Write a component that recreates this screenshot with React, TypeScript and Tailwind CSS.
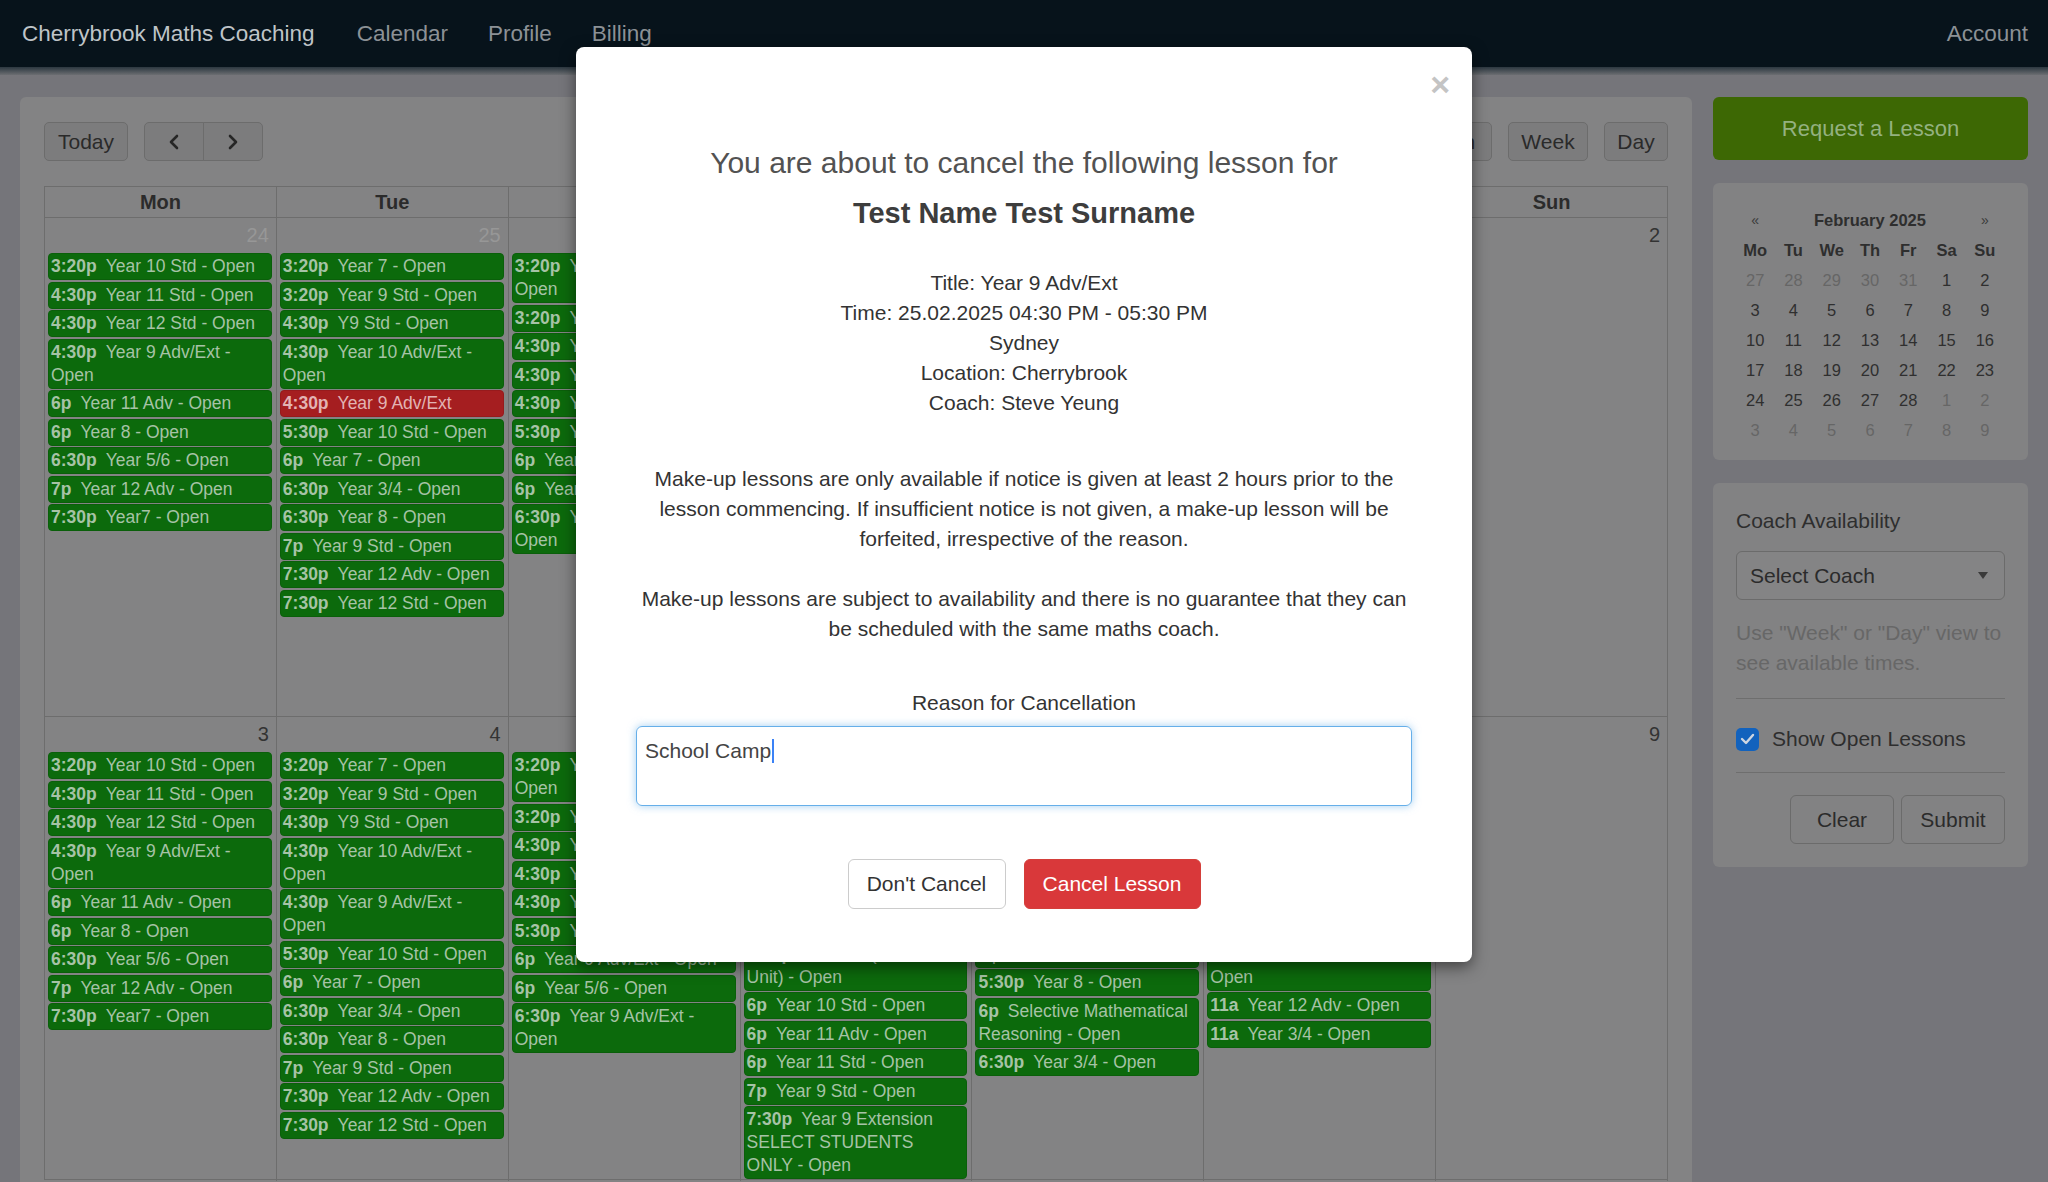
import React from 'react';

type CalEvent = { time: string; title: string; booked?: boolean };
type Day = { num: number; muted?: boolean; events: CalEvent[] };

const ev = (time: string, title: string, booked = false): CalEvent => ({ time, title, booked });

const monday: CalEvent[] = [
  ev('3:20p', 'Year 10 Std - Open'),
  ev('4:30p', 'Year 11 Std - Open'),
  ev('4:30p', 'Year 12 Std - Open'),
  ev('4:30p', 'Year 9 Adv/Ext - Open'),
  ev('6p', 'Year 11 Adv - Open'),
  ev('6p', 'Year 8 - Open'),
  ev('6:30p', 'Year 5/6 - Open'),
  ev('7p', 'Year 12 Adv - Open'),
  ev('7:30p', 'Year7 - Open'),
];

const tuesday = (booked: boolean): CalEvent[] => [
  ev('3:20p', 'Year 7 - Open'),
  ev('3:20p', 'Year 9 Std - Open'),
  ev('4:30p', 'Y9 Std - Open'),
  ev('4:30p', 'Year 10 Adv/Ext - Open'),
  booked ? ev('4:30p', 'Year 9 Adv/Ext', true) : ev('4:30p', 'Year 9 Adv/Ext - Open'),
  ev('5:30p', 'Year 10 Std - Open'),
  ev('6p', 'Year 7 - Open'),
  ev('6:30p', 'Year 3/4 - Open'),
  ev('6:30p', 'Year 8 - Open'),
  ev('7p', 'Year 9 Std - Open'),
  ev('7:30p', 'Year 12 Adv - Open'),
  ev('7:30p', 'Year 12 Std - Open'),
];

const wednesday = (late: CalEvent): CalEvent[] => [
  ev('3:20p', 'Year 10 Adv/Ext - Open'),
  ev('3:20p', 'Year 12 Std - Open'),
  ev('4:30p', 'Year 8 - Open'),
  ev('4:30p', 'Year 10 Std - Open'),
  ev('4:30p', 'Year 11 Adv - Open'),
  ev('5:30p', 'Year 7 - Open'),
  late,
  ev('6p', 'Year 5/6 - Open'),
  ev('6:30p', 'Year 9 Adv/Ext - Open'),
];

const weeks: Day[][] = [
  [
    { num: 24, muted: true, events: monday },
    { num: 25, muted: true, events: tuesday(true) },
    { num: 26, muted: true, events: wednesday(ev('6p', 'Year 9 Std - Open')) },
    {
      num: 27,
      muted: true,
      events: [
        ev('3:20p', 'Year 7 - Open'),
        ev('4:30p', 'Year 8 - Open'),
        ev('4:30p', 'Year 10 Adv/Ext - Open'),
        ev('4:30p', 'Year 12 Std - Open'),
        ev('5:30p', 'Year 9 Std - Open'),
        ev('5:30p', 'Year 11 Std - Open'),
        ev('6p', 'Year 10 Std - Open'),
        ev('6p', 'Year 11 Adv - Open'),
        ev('7p', 'Year 9 Std - Open'),
      ],
    },
    {
      num: 28,
      muted: true,
      events: [
        ev('3:20p', 'Year 8 - Open'),
        ev('4:30p', 'Year 11 Std - Open'),
        ev('4:30p', 'Year 12 Adv - Open'),
        ev('5:30p', 'Year 7 - Open'),
        ev('5:30p', 'Year 8 - Open'),
        ev('6:30p', 'Year 3/4 - Open'),
      ],
    },
    {
      num: 1,
      events: [
        ev('9a', 'Year 7 - Open'),
        ev('9a', 'Year 10 Std - Open'),
        ev('10a', 'Year 11 Std - Open'),
        ev('11a', 'Year 12 Adv - Open'),
        ev('11a', 'Year 3/4 - Open'),
      ],
    },
    { num: 2, events: [] },
  ],
  [
    { num: 3, events: monday },
    { num: 4, events: tuesday(false) },
    { num: 5, events: wednesday(ev('6p', 'Year 9 Adv/Ext - Open')) },
    {
      num: 6,
      events: [
        ev('3:20p', 'Year 7 - Open'),
        ev('4:30p', 'Year 10 Adv/Ext - Open'),
        ev('4:30p', 'Year 12 Std - Open'),
        ev('5:30p', 'Year 9 Adv/Ext - Open'),
        ev('5:30p', 'Year 11 Std - Open'),
        ev('5:30p', 'Year 5/6 (Selective Unit) - Open'),
        ev('6p', 'Year 10 Std - Open'),
        ev('6p', 'Year 11 Adv - Open'),
        ev('6p', 'Year 11 Std - Open'),
        ev('7p', 'Year 9 Std - Open'),
        ev('7:30p', 'Year 9 Extension\nSELECT STUDENTS\nONLY - Open'),
      ],
    },
    {
      num: 7,
      events: [
        ev('3:20p', 'Year 8 - Open'),
        ev('4:30p', 'Year 9 Adv/Ext - Open'),
        ev('4:30p', 'Year 11 Std - Open'),
        ev('4:30p', 'Year 12 Adv - Open'),
        ev('5:30p', 'Year 7 - Open'),
        ev('5:30p', 'Year 10 Adv/Ext - Open'),
        ev('5:30p', 'Year 8 - Open'),
        ev('6p', 'Selective Mathematical Reasoning - Open'),
        ev('6:30p', 'Year 3/4 - Open'),
      ],
    },
    {
      num: 8,
      events: [
        ev('9a', 'Year 7 - Open'),
        ev('9:30a', 'Year 9 Adv/Ext - Open'),
        ev('9:30a', 'Year 10 Adv/Ext - Open'),
        ev('10a', 'Year 11 Std - Open'),
        ev('10a', 'Year 8 - Open'),
        ev('10:30a', 'Year 10 Adv/Ext - Open'),
        ev('11a', 'Year 12 Adv - Open'),
        ev('11a', 'Year 3/4 - Open'),
      ],
    },
    { num: 9, events: [] },
  ],
];

const miniRows: { n: number; muted?: boolean }[][] = [
  [27, 28, 29, 30, 31].map(n => ({ n, muted: true })).concat([{ n: 1 }, { n: 2 }]),
  [3, 4, 5, 6, 7, 8, 9].map(n => ({ n })),
  [10, 11, 12, 13, 14, 15, 16].map(n => ({ n })),
  [17, 18, 19, 20, 21, 22, 23].map(n => ({ n })),
  [24, 25, 26, 27, 28].map(n => ({ n })).concat([{ n: 1, muted: true }, { n: 2, muted: true }]),
  [3, 4, 5, 6, 7, 8, 9].map(n => ({ n, muted: true })),
];

function EventChip({ item }: { item: CalEvent }) {
  return (
    <div
      className={`ml-[3px] mr-[4px] mb-[1.5px] rounded-[4px] border px-[2px] py-px text-[17.5px] leading-[23px] whitespace-pre-line ${
        item.booked
          ? 'bg-[#a51e20] border-[#971a1c] text-[#e2b3b3]'
          : 'bg-[#0c6a0c] border-[#0a5f0a] text-[#a6c3a6]'
      }`}
    >
      <span className="font-bold mr-[9px]">{item.time}</span>
      {item.title}
    </div>
  );
}

function ToolbarButton({ children, className = '' }: { children: React.ReactNode; className?: string }) {
  return (
    <button
      className={`h-[39px] rounded-[5px] border border-[#6c6c6c] bg-[#7c7c7d] text-[21px] text-[#2a2a2a] ${className}`}
    >
      {children}
    </button>
  );
}

function Chevron({ dir }: { dir: 'left' | 'right' }) {
  return (
    <svg width="12" height="16" viewBox="0 0 12 16" fill="none" stroke="#262626" strokeWidth="2.6" strokeLinecap="round" strokeLinejoin="round">
      {dir === 'left' ? <polyline points="9,2 3,8 9,14" /> : <polyline points="3,2 9,8 3,14" />}
    </svg>
  );
}

export default function App() {
  return (
    <div className="relative h-[1182px] overflow-hidden bg-[#75757a] font-['Liberation_Sans',Arial,sans-serif]">
      {/* Navbar */}
      <nav className="flex h-[67px] items-center bg-[#07131b] pl-[22px] pr-[20px] text-[22.5px]">
        <span className="text-[#bfc4c8]">Cherrybrook Maths Coaching</span>
        <div className="ml-[42px] flex gap-[40px] text-[#8c9196]">
          <span>Calendar</span>
          <span>Profile</span>
          <span>Billing</span>
        </div>
        <span className="ml-auto text-[#8c9196]">Account</span>
      </nav>
      <div className="h-[8px] bg-linear-to-b from-[#2c3840] to-[#6c6e72]" />

      <div className="flex gap-[21px] px-[20px] pt-[22px]">
        {/* Calendar panel */}
        <div className="h-[1200px] w-[1672px] rounded-[6px] bg-[#838384] px-[24px] pt-[25px]">
          <div className="flex h-[39px] items-center justify-between">
            <div className="flex gap-[16px]">
              <ToolbarButton className="w-[84px]">Today</ToolbarButton>
              <div className="flex">
                <button className="flex h-[39px] w-[60px] items-center justify-center rounded-l-[5px] border border-[#6c6c6c] bg-[#7c7c7d]">
                  <Chevron dir="left" />
                </button>
                <button className="-ml-px flex h-[39px] w-[60px] items-center justify-center rounded-r-[5px] border border-[#6c6c6c] bg-[#7c7c7d]">
                  <Chevron dir="right" />
                </button>
              </div>
            </div>
            <h2 className="text-[28px] text-[#2a2a2a]">March 2025</h2>
            <div className="flex gap-[16px]">
              <ToolbarButton className="w-[92px] bg-[#5f5f60]">Month</ToolbarButton>
              <ToolbarButton className="w-[80px]">Week</ToolbarButton>
              <ToolbarButton className="w-[64px]">Day</ToolbarButton>
            </div>
          </div>

          <div className="mt-[25px]">
            <div className="grid grid-cols-7 border-t border-l border-[#6d6d6d]">
              {['Mon', 'Tue', 'Wed', 'Thu', 'Fri', 'Sat', 'Sun'].map(d => (
                <div key={d} className="h-[31px] border-r border-b border-[#6d6d6d] text-center text-[20px] font-bold leading-[30px] text-[#2b2b2b]">
                  {d}
                </div>
              ))}
            </div>
            {weeks.map((week, wi) => (
              <div
                key={wi}
                className={`grid grid-cols-7 border-l border-b border-[#6d6d6d] ${wi === 0 ? 'h-[499px]' : 'h-[463px]'}`}
              >
                {week.map(day => (
                  <div key={day.num} className="min-w-0 border-r border-[#6d6d6d] pt-[2px]">
                    <div className={`h-[30px] pr-[7px] text-right text-[20px] leading-[30px] ${day.muted ? 'text-[#979797]' : 'text-[#333333]'}`}>
                      {day.num}
                    </div>
                    <div className="mt-[3px]">
                      {day.events.map((item, i) => (
                        <EventChip key={i} item={item} />
                      ))}
                    </div>
                  </div>
                ))}
              </div>
            ))}
          </div>
        </div>

        {/* Sidebar */}
        <aside className="flex w-[315px] flex-col">
          <button className="h-[63px] rounded-[6px] bg-[#3d6804] text-[22px] text-[#94b180]">Request a Lesson</button>

          <div className="mt-[23px] h-[277px] rounded-[6px] bg-[#828283] px-[23px] pt-[22px]">
            <div className="grid w-[268px] grid-cols-7 text-center text-[16.5px] leading-[30px]">
              <span className="text-[14px] text-[#3a3a3a]">«</span>
              <span className="col-span-5 font-bold text-[#2e2e2e]">February 2025</span>
              <span className="text-[14px] text-[#3a3a3a]">»</span>
              {['Mo', 'Tu', 'We', 'Th', 'Fr', 'Sa', 'Su'].map(d => (
                <span key={d} className="font-bold text-[#2e2e2e]">{d}</span>
              ))}
              {miniRows.flat().map((c, i) => (
                <span key={i} className={c.muted ? 'text-[#666666]' : 'text-[#2f2f2f]'}>
                  {c.n}
                </span>
              ))}
            </div>
          </div>

          <div className="mt-[23px] rounded-[6px] bg-[#828283] px-[23px] pt-[23px] pb-[23px] text-[21px]">
            <div className="leading-[30px] text-[#2e2e2e]">Coach Availability</div>
            <div className="mt-[15px] flex h-[49px] items-center justify-between rounded-[6px] border border-[#6b6b6b] bg-[#848485] pl-[13px] pr-[16px] text-[#2b2b2b]">
              <span>Select Coach</span>
              <svg width="10" height="7" viewBox="0 0 10 7">
                <polygon points="0,0 10,0 5,7" fill="#3a3a3a" />
              </svg>
            </div>
            <p className="mt-[18px] leading-[30px] text-[#676767]">Use "Week" or "Day" view to see available times.</p>
            <div className="mt-[20px] border-t border-[#6e6e6e]" />
            <label className="mt-[25px] flex h-[30px] items-center gap-[13px] text-[#2e2e2e]">
              <span className="flex h-[23px] w-[23px] items-center justify-center rounded-[5px] bg-[#1262bd]">
                <svg width="15" height="12" viewBox="0 0 15 12" fill="none" stroke="#cdd6e2" strokeWidth="2.4" strokeLinecap="round" strokeLinejoin="round">
                  <polyline points="2,6 6,10 13,2" />
                </svg>
              </span>
              Show Open Lessons
            </label>
            <div className="mt-[18px] border-t border-[#6e6e6e]" />
            <div className="mt-[22px] flex justify-end gap-[7px]">
              <button className="h-[49px] w-[104px] rounded-[6px] border border-[#6b6b6b] bg-[#828283] text-[#2b2b2b]">Clear</button>
              <button className="h-[49px] w-[104px] rounded-[6px] border border-[#6b6b6b] bg-[#828283] text-[#2b2b2b]">Submit</button>
            </div>
          </div>
        </aside>
      </div>

      {/* Cancel lesson modal */}
      <div className="absolute left-[576px] top-[47px] w-[896px] rounded-[8px] bg-white px-[60px] pt-[96px] pb-[53px] text-center shadow-[0_5px_15px_rgba(0,0,0,0.5)]">
        <button className="absolute right-[22px] top-[17px] text-[34px] font-bold leading-[40px] text-[#c4c4c4]">×</button>
        <h3 className="text-[30px] leading-[40px] text-[#525252]">You are about to cancel the following lesson for</h3>
        <h4 className="mt-[10px] text-[29px] font-bold leading-[40px] text-[#3d3d3d]">Test Name Test Surname</h4>

        <div className="mt-[35px] text-[21px] leading-[30px] text-[#333333]">
          <div>Title: Year 9 Adv/Ext</div>
          <div>Time: 25.02.2025 04:30 PM - 05:30 PM</div>
          <div>Sydney</div>
          <div>Location: Cherrybrook</div>
          <div>Coach: Steve Yeung</div>
        </div>

        <p className="mt-[46px] text-[21px] leading-[30px] text-[#333333]">
          Make-up lessons are only available if notice is given at least 2 hours prior to the lesson commencing. If insufficient notice is not given, a make-up lesson will be forfeited, irrespective of the reason.
        </p>
        <p className="mt-[30px] text-[21px] leading-[30px] text-[#333333]">
          Make-up lessons are subject to availability and there is no guarantee that they can be scheduled with the same maths coach.
        </p>

        <div className="mt-[44px] text-[21px] leading-[30px] text-[#333333]">Reason for Cancellation</div>
        <div className="mt-[8px] h-[80px] rounded-[6px] border border-[#66afe9] px-[8px] pt-[7px] text-left text-[21px] leading-[30px] text-[#444444] shadow-[0_0_8px_rgba(102,175,233,0.6)]">
          School Camp
          <span className="ml-px inline-block h-[24px] w-[1.5px] translate-y-[5px] bg-[#3b82f6]" />
        </div>

        <div className="mt-[53px] flex justify-center gap-[18px] text-[21px]">
          <button className="h-[50px] w-[158px] rounded-[6px] border border-[#cccccc] bg-white text-[#333333]">Don't Cancel</button>
          <button className="h-[50px] w-[177px] rounded-[6px] border border-[#d43f3a] bg-[#d9383a] text-white">Cancel Lesson</button>
        </div>
      </div>
    </div>
  );
}
